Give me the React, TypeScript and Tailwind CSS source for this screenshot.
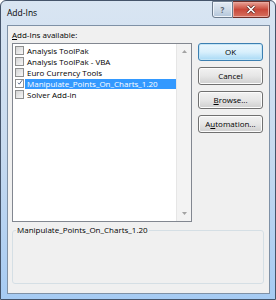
import { ReactNode } from "react";

const items = [
  { label: "Analysis ToolPak", checked: false },
  { label: "Analysis ToolPak - VBA", checked: false },
  { label: "Euro Currency Tools", checked: false },
  { label: "Manipulate_Points_On_Charts_1.20", checked: true, selected: true },
  { label: "Solver Add-in", checked: false },
];

const CheckBox = ({ checked }: { checked: boolean }) => (
  <span
    className={`flex h-[9px] w-[9px] shrink-0 items-center justify-center border border-[#8e8f8f] ${
      checked ? "bg-white" : "bg-gradient-to-br from-[#d4d4d4] to-[#f7f7f7]"
    }`}
  >
    {checked && (
      <svg width="9" height="9" viewBox="0 0 9 9" className="-mt-[2px] ml-[1px]">
        <path d="M1.5 4.8 L3.4 7 L7.8 1" fill="none" stroke="#3c4f73" strokeWidth="1.3" />
      </svg>
    )}
  </span>
);

const Button = ({ children, primary }: { children: ReactNode; primary?: boolean }) => (
  <button
    type="button"
    className={`h-[18px] w-[65px] rounded-[3px] border text-[8px] text-black ${
      primary
        ? "border-[#3c7fb1] bg-gradient-to-b from-[#eaf6fd] via-[#d9f0fc] to-[#a7d9f5] shadow-[inset_0_0_0_1px_#c4e5f6]"
        : "border-[#707070] bg-gradient-to-b from-[#f2f2f2] via-[#e6e6e6] to-[#cfcfcf] shadow-[inset_0_0_0_1px_#fcfcfc]"
    }`}
  >
    {children}
  </button>
);

const ScrollArrow = ({ down }: { down?: boolean }) => (
  <div className="flex h-[15px] items-center justify-center">
    <svg width="5" height="3" viewBox="0 0 5 3">
      <path d={down ? "M0 0 H5 L2.5 3 Z" : "M0 3 H5 L2.5 0 Z"} fill="#a3a3a3" />
    </svg>
  </div>
);

export default function App() {
  return (
    <div className="flex h-[300px] w-[276px] flex-col overflow-hidden rounded-t-[6px] border border-[#45546a] bg-gradient-to-b from-[#d9e5f2] via-[#c7daef] to-[#a6cbf3] font-['Open_Sans',sans-serif] text-black">
      {/* title bar */}
      <div className="flex h-[24px] shrink-0 items-start justify-between">
        <span className="ml-[6px] mt-[6px] text-[8.5px] leading-[12px]">Add-Ins</span>
        <div className="mr-[5px] flex">
          <div className="flex h-[17px] w-[21px] items-center justify-center rounded-bl-[3px] border border-[#6c7b8d] bg-gradient-to-b from-[#e3ebf4] via-[#cfdbe8] to-[#b2c5da] text-[8px] font-bold text-[#59636f] shadow-[inset_0_0_0_1px_#eef3f9]">
            ?
          </div>
          <div className="flex h-[17px] w-[37px] items-center justify-center rounded-br-[3px] border border-l-0 border-[#6e2e28] bg-gradient-to-b from-[#e8a196] via-[#c9483a] to-[#d5705f] shadow-[inset_0_0_0_1px_#eaa89e]">
            <svg width="12" height="9" viewBox="0 0 12 9">
              <path d="M2.5 1 L9.5 8 M9.5 1 L2.5 8" stroke="#5a2420" strokeWidth="3" />
              <path d="M2.5 1 L9.5 8 M9.5 1 L2.5 8" stroke="#ffffff" strokeWidth="1.7" />
            </svg>
          </div>
        </div>
      </div>

      {/* client area */}
      <div className="mb-[5px] ml-[6px] mr-[5px] flex flex-1 flex-col border border-[#7f91a6] bg-[#f0f0f0] px-[4px] pt-[3px] text-[8px]">
        <div className="h-[12px] leading-[12px]">
          <span className="underline decoration-[0.5px] underline-offset-[1px]">A</span>dd-Ins available:
        </div>
        <div className="mt-[2px] flex">
          <div className="flex h-[179px] w-[180px] border border-[#828790] bg-white">
            <div className="flex flex-1 flex-col pt-[1px]">
              {items.map((it) => (
                <div key={it.label} className="flex h-[11px] items-center pl-[2px]">
                  <CheckBox checked={it.checked} />
                  <span
                    className={`ml-[1px] flex h-[10px] flex-1 items-center whitespace-nowrap pl-[2px] ${
                      it.selected ? "bg-[#3399ff] text-white" : ""
                    }`}
                  >
                    {it.label}
                  </span>
                </div>
              ))}
            </div>
            <div className="flex w-[15px] flex-col justify-between border-l border-[#e6e6e6] bg-[#f3f3f3]">
              <ScrollArrow />
              <ScrollArrow down />
            </div>
          </div>
          <div className="ml-[6px] flex flex-col gap-[6px]">
            <Button primary>OK</Button>
            <Button>Cancel</Button>
            <Button>
              <span className="underline decoration-[0.5px] underline-offset-[1px]">B</span>rowse...
            </Button>
            <Button>
              A<span className="underline decoration-[0.5px] underline-offset-[1px]">u</span>tomation...
            </Button>
          </div>
        </div>
        <fieldset className="mt-[2px] h-[60px] w-[252px] rounded-[3px] border border-[#d5dfe5]">
          <legend className="ml-[3px] h-[12px] px-[1px] leading-[12px]">Manipulate_Points_On_Charts_1.20</legend>
        </fieldset>
      </div>
    </div>
  );
}
